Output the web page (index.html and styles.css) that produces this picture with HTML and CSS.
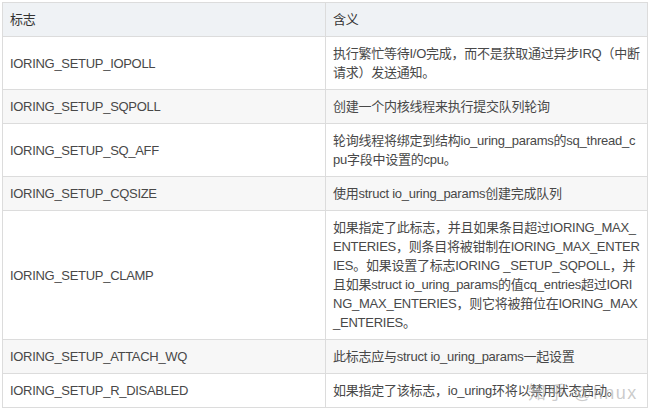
FILE: index.html
```html
<!DOCTYPE html>
<html lang="zh">
<head>
<meta charset="utf-8">
<link rel="stylesheet" href="styles.css">
</head>
<body>
<div class="wrap">
<table class="flags">
  <thead>
    <tr><th class="c1">标志</th><th class="c2">含义</th></tr>
  </thead>
  <tbody>
    <tr><td class="flag">IORING_SETUP_IOPOLL</td><td>执行繁忙等待I/O完成，而不是获取通过异步IRQ（中断<br>请求）发送通知。</td></tr>
    <tr><td class="flag">IORING_SETUP_SQPOLL</td><td>创建一个内核线程来执行提交队列轮询</td></tr>
    <tr><td class="flag">IORING_SETUP_SQ_AFF</td><td>轮询线程将绑定到结构io_uring_params的sq_thread_c<br>pu字段中设置的cpu。</td></tr>
    <tr><td class="flag">IORING_SETUP_CQSIZE</td><td>使用struct io_uring_params创建完成队列</td></tr>
    <tr><td class="flag">IORING_SETUP_CLAMP</td><td>如果指定了此标志，并且如果条目超过IORING_MAX_<br>ENTERIES，则条目将被钳制在IORING_MAX_ENTER<br>IES。如果设置了标志IORING _SETUP_SQPOLL，并<br>且如果struct io_uring_params的值cq_entries超过IORI<br>NG_MAX_ENTERIES，则它将被箝位在IORING_MAX<br>_ENTERIES。</td></tr>
    <tr><td class="flag">IORING_SETUP_ATTACH_WQ</td><td>此标志应与struct io_uring_params一起设置</td></tr>
    <tr><td class="flag">IORING_SETUP_R_DISABLED</td><td>如果指定了该标志，io_uring环将以禁用状态启动。</td></tr>
  </tbody>
</table>
<div class="watermark">知乎 @linux</div>
</div>
</body>
</html>
```
FILE: styles.css
```css
html, body {
  margin: 0;
  padding: 0;
  background: #ffffff;
}
.wrap {
  position: relative;
  width: 650px;
  height: 412px;
  padding: 2px 0 0 2px;
  box-sizing: border-box;
}
.flags {
  border-collapse: collapse;
  width: 646px;
  table-layout: fixed;
  font-family: "Liberation Sans", "Noto Sans CJK SC", sans-serif;
  font-size: 13px;
  line-height: 19px;
  color: #484848;
}
.flags th, .flags td {
  border: 1px solid #dcdcdc;
  padding: 7px 7px;
  text-align: left;
  vertical-align: middle;
  white-space: nowrap;
  letter-spacing: -0.25px;
  font-weight: normal;
}
.flags td.flag {
  letter-spacing: -0.3px;
}
.flags th.c1 { width: 308px; }
.flags thead th {
  background: #eff2f5;
  color: #333333;
}
.flags tbody tr:nth-child(even) td {
  background: #f7f7f7;
}
.watermark {
  position: absolute;
  left: 528px;
  top: 378px;
  font-family: "Liberation Sans", "Noto Sans CJK SC", sans-serif;
  font-size: 18px;
  color: rgba(160, 160, 160, 0.55);
  letter-spacing: 1.5px;
}
```
